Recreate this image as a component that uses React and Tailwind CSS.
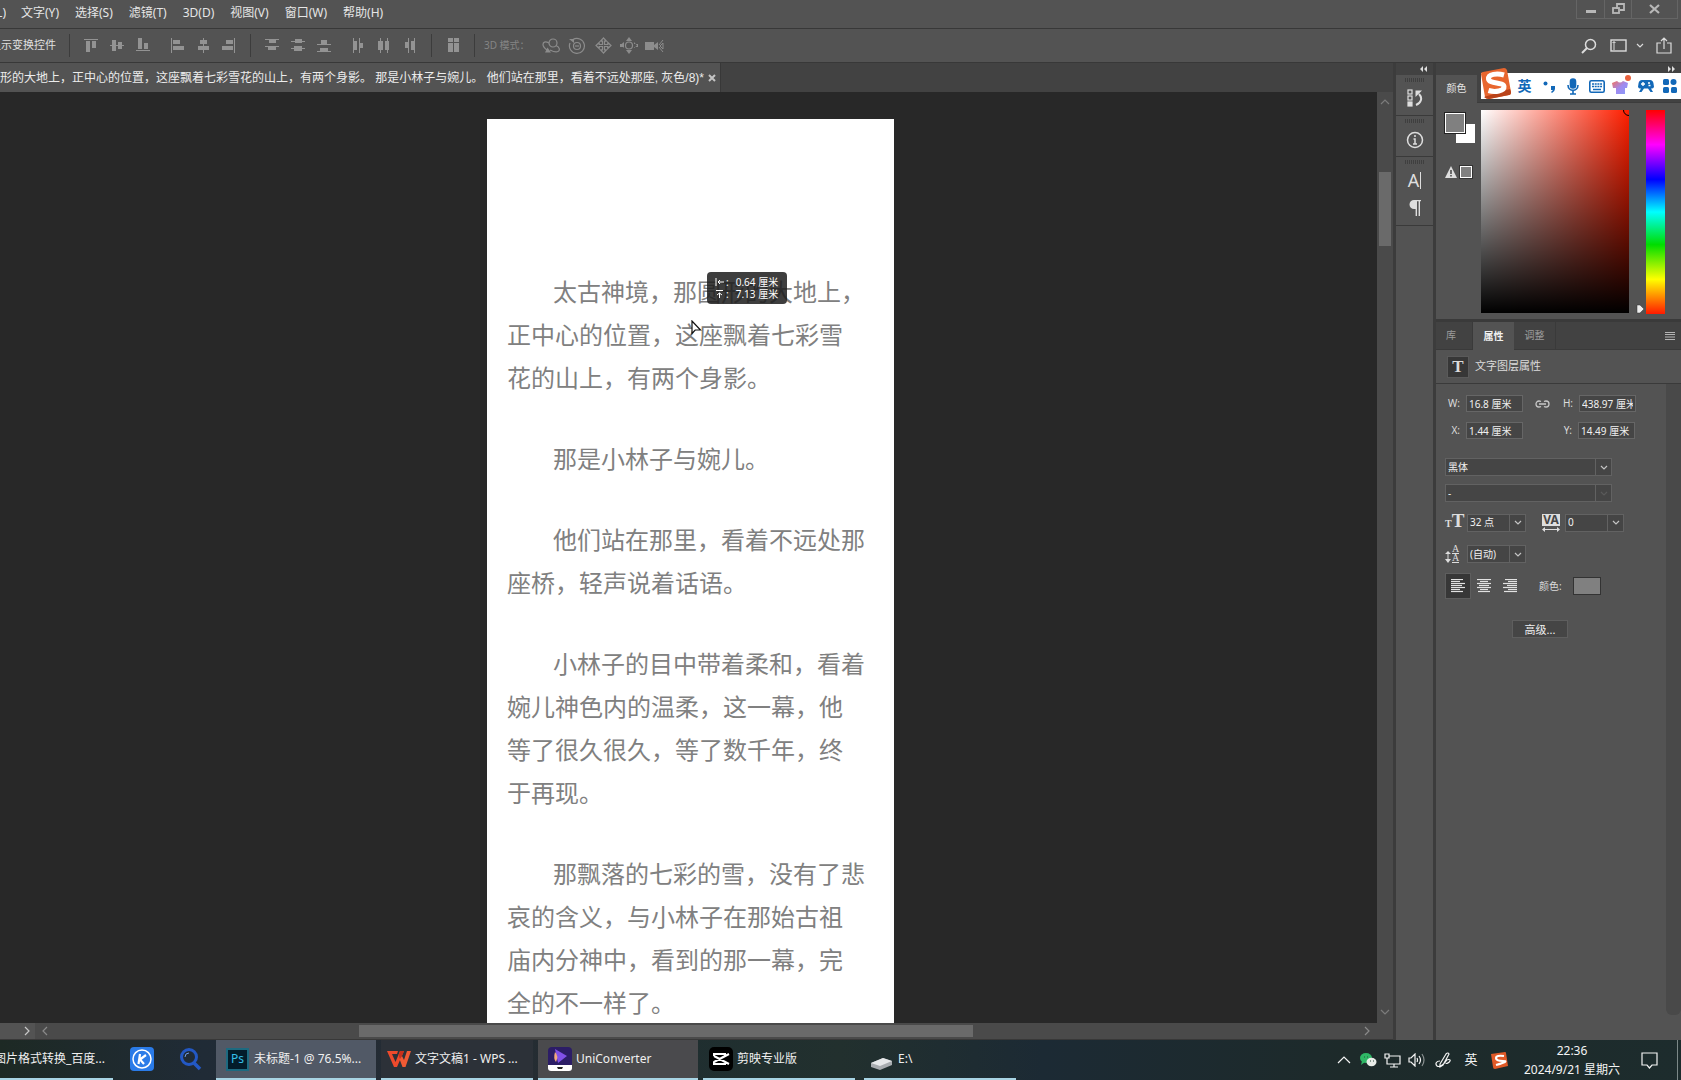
import React from "react";

const UI = "font-['Noto_Sans','Noto_Sans_CJK_SC',sans-serif]";

const MENUS = ["文字(Y)", "选择(S)", "滤镜(T)", "3D(D)", "视图(V)", "窗口(W)", "帮助(H)"];

const PARAGRAPHS = [
  ["太古神境，那圆形的大地上，", "正中心的位置，这座飘着七彩雪", "花的山上，有两个身影。"],
  ["那是小林子与婉儿。"],
  ["他们站在那里，看着不远处那", "座桥，轻声说着话语。"],
  ["小林子的目中带着柔和，看着", "婉儿神色内的温柔，这一幕，他", "等了很久很久，等了数千年，终", "于再现。"],
  ["那飘落的七彩的雪，没有了悲", "哀的含义，与小林子在那始古祖", "庙内分神中，看到的那一幕，完", "全的不一样了。"],
];

/* Each glyph is a list of filled rectangles [x, y, w, h] on a 16px grid. */
const ALIGN = [
  { name: "顶对齐", r: [[1, 2, 14, 1], [3, 4, 4, 11], [9, 4, 4, 7]] },
  { name: "垂直居中对齐", r: [[1, 8, 14, 1], [3, 3, 4, 11], [9, 5, 4, 7]] },
  { name: "底对齐", r: [[1, 13, 14, 1], [3, 1, 4, 11], [9, 6, 4, 6]] },
];
const ALIGN_H = [
  { name: "左对齐", r: [[2, 1, 1, 15], [4, 3, 7, 4], [4, 9, 11, 4]] },
  { name: "水平居中对齐", r: [[8, 1, 1, 15], [5, 3, 7, 4], [3, 9, 11, 4]] },
  { name: "右对齐", r: [[13, 1, 1, 15], [5, 3, 7, 4], [1, 9, 11, 4]] },
];
const DIST = [
  { name: "按顶分布", r: [[1, 2, 14, 1], [5, 3, 7, 3], [1, 9, 14, 1], [4, 10, 8, 3]] },
  { name: "垂直居中分布", r: [[1, 4, 14, 1], [5, 2, 7, 4], [1, 11, 14, 1], [4, 9, 8, 5]] },
  { name: "按底分布", r: [[1, 7, 14, 1], [5, 3, 6, 4], [1, 14, 14, 1], [4, 11, 8, 3]] },
];
const DIST_H = [
  { name: "按左分布", r: [[3, 1, 1, 15], [4, 4, 3, 9], [9, 1, 1, 15], [10, 6, 3, 5]] },
  { name: "水平居中分布", r: [[4, 1, 1, 15], [2, 4, 5, 9], [11, 1, 1, 15], [9, 4, 4, 9]] },
  { name: "按右分布", r: [[6, 1, 1, 15], [3, 5, 3, 6], [12, 1, 1, 15], [9, 4, 3, 9]] },
];
const AUTO = [{ name: "自动对齐图层", r: [[3, 1, 5, 4], [3, 6, 5, 9], [9, 1, 5, 4], [9, 6, 5, 9]] }];

function RectTool({ item }) {
  return (
    <button aria-label={item.name} className="flex w-[26px] justify-center text-[#939393]">
      <svg width="16" height="17" viewBox="0 0 16 17" fill="currentColor">
        {item.r.map((r, i) => (
          <rect key={i} x={r[0]} y={r[1]} width={r[2]} height={r[3]} />
        ))}
      </svg>
    </button>
  );
}

const Sep = () => <span className="h-[23px] w-px bg-[#3c3c3c]" />;

function Chevron({ className = "", d = "M1 1l4 4 4-4", w = 10, h = 6 }) {
  return (
    <svg className={className} width={w} height={h} viewBox={`0 0 ${w} ${h}`} fill="none" stroke="currentColor" strokeWidth="1.2">
      <path d={d} />
    </svg>
  );
}

function TopBars() {
  return (
    <>
      <header className="flex h-[29px] shrink-0 items-start justify-between border-b border-[#383838] bg-[#535353]">
        <nav className="flex h-[26px] items-center text-[12px] text-[#e6e6e6]">
          <button className="flex w-[6px] justify-end overflow-hidden whitespace-nowrap">图层(L)</button>
          <div className="ml-[15px] flex gap-4">
            {MENUS.map((m) => (
              <button key={m}>{m}</button>
            ))}
          </div>
        </nav>
        <div className="mr-[3px] flex h-[19px] border-b border-l border-[#656565] text-[#b8b8b8]">
          <button aria-label="最小化" className="flex w-[28px] items-center justify-center border-r border-[#656565]">
            <svg width="12" height="12"><rect x="1" y="7" width="10" height="3" fill="currentColor" /></svg>
          </button>
          <button aria-label="还原" className="flex w-[27px] items-center justify-center border-r border-[#656565]">
            <svg width="13" height="12" fill="none" stroke="currentColor" strokeWidth="1.8">
              <path d="M5 6V1h7v6H8" /><rect x="1" y="5" width="6" height="5" />
            </svg>
          </button>
          <button aria-label="关闭" className="flex w-[46px] items-center justify-center border-r border-[#656565]">
            <svg width="11" height="10" stroke="currentColor" strokeWidth="2.2"><path d="M1 1l9 8M10 1l-9 8" /></svg>
          </button>
        </div>
      </header>
      <div className="flex h-[34px] shrink-0 items-center border-b border-[#383838] bg-[#535353]">
        <div className="flex w-[56px] justify-end overflow-hidden text-[11px] whitespace-nowrap text-[#e0e0e0]">显示变换控件</div>
        <div className="ml-[13px] flex items-center">
          <Sep />
          <div className="mx-[8px] flex">{ALIGN.map((a) => <RectTool key={a.name} item={a} />)}</div>
          <div className="mr-[8px] flex">{ALIGN_H.map((a) => <RectTool key={a.name} item={a} />)}</div>
          <Sep />
          <div className="mx-[8px] flex">{DIST.map((a) => <RectTool key={a.name} item={a} />)}</div>
          <div className="mr-[8px] flex">{DIST_H.map((a) => <RectTool key={a.name} item={a} />)}</div>
          <Sep />
          <div className="mx-[8px] flex">{AUTO.map((a) => <RectTool key={a.name} item={a} />)}</div>
          <Sep />
          <span className="ml-[9px] w-[54px] text-[10px] whitespace-nowrap text-[#858585]">3D 模式：</span>
          <div className="flex items-center text-[#8c8c8c]">
            <button aria-label="旋转 3D 对象" className="flex w-[26px] justify-center">
              <svg width="18" height="16" viewBox="0 0 18 16" fill="none" stroke="currentColor" strokeWidth="1.2">
                <circle cx="11" cy="5" r="4" /><path d="M7 5C3 3 1 4 1 6.500s2 4 4 5.500M14 7.500c4 1.500 4 5 2 6s-5 0-8-1.500" /><path d="M5.500 9.500l-2.500 5h6z" fill="currentColor" stroke="none" />
              </svg>
            </button>
            <button aria-label="滚动 3D 对象" className="flex w-[26px] justify-center">
              <svg width="18" height="18" viewBox="0 0 18 18" fill="none" stroke="currentColor" strokeWidth="1.200">
                <path d="M5 2.500a7.500 7.500 0 1 1-3 3.500" /><path d="M1 2h5v4z" fill="currentColor" stroke="none" /><circle cx="9" cy="9" r="3.500" /><path d="M7 9h4" />
              </svg>
            </button>
            <button aria-label="拖动 3D 对象" className="flex w-[26px] justify-center">
              <svg width="17" height="17" viewBox="0 0 17 17" fill="none" stroke="currentColor" strokeWidth="1.200">
                <path d="M8.500 1l3 3.200h-2v3.300h3.300v-2l3.200 3-3.200 3v-2H9.500v3.300h2l-3 3.200-3-3.200h2V9.500H4.200v2L1 8.500l3.200-3v2h3.300V4.200h-2z" />
              </svg>
            </button>
            <button aria-label="滑动 3D 对象" className="flex w-[26px] justify-center">
              <svg width="18" height="17" viewBox="0 0 18 17" fill="currentColor">
                <circle cx="9" cy="8.500" r="3.500" fill="none" stroke="currentColor" strokeWidth="1.200" />
                <path d="M9 0l3 4H6zM9 17l3-4H6zM1 7.500L4 5v6zM0 7h4v3H0zM17 8.500L14 5v6zM14 7h4v3h-4z" />
              </svg>
            </button>
            <button aria-label="缩放 3D 对象" className="flex w-[26px] justify-center">
              <svg width="20" height="12" viewBox="0 0 20 12" fill="currentColor">
                <path d="M0 2h9v3l4-3v8L9 7v3H0z" /><path d="M18 0l-4 5M18 12l-4-5M18 3v6l-3-3z" fill="none" stroke="currentColor" />
              </svg>
            </button>
          </div>
        </div>
        <div className="mr-[9px] ml-auto flex items-center text-[#dcdcdc]">
          <button aria-label="搜索" className="mr-[13px]">
            <svg width="16" height="16" viewBox="0 0 16 16" fill="none" stroke="currentColor" strokeWidth="1.5">
              <circle cx="9.500" cy="6.500" r="5" /><path d="M6 10l-5 5" strokeWidth="2" />
            </svg>
          </button>
          <button aria-label="工作区" className="flex items-center gap-[9px]">
            <svg width="17" height="13" viewBox="0 0 17 13" fill="none" stroke="currentColor">
              <rect x="1" y="1" width="15" height="11" strokeWidth="1.400" /><path d="M3 3h2v1H3zM3 6h2M3 8h2M3 10h2" />
            </svg>
            <Chevron d="M1 1l3 3 3-3" w={8} h={5} />
          </button>
          <button aria-label="共享" className="ml-[12px]">
            <svg width="16" height="17" viewBox="0 0 16 17" fill="none" stroke="currentColor" strokeWidth="1.200">
              <path d="M5 6H1v10h14V6h-4M8 12V1M5 4l3-3 3 3" />
            </svg>
          </button>
        </div>
      </div>
    </>
  );
}

function Workspace() {
  return (
    <main className="flex min-w-0 flex-1 flex-col">
      <div className="flex h-[29px] shrink-0 bg-[#424242]">
        <div className="flex items-center gap-[4px] border-r border-[#383838] bg-[#535353] pr-[4px] font-['Liberation_Sans','Noto_Sans_CJK_SC',sans-serif] text-[12px] whitespace-nowrap text-[#ececec]">
          <span>形的大地上，正中心的位置，这座飘着七彩雪花的山上，有两个身影。 那是小林子与婉儿。 他们站在那里，看着不远处那座, 灰色/8)*</span>
          <button aria-label="关闭文档" className="text-[#c4c4c4]">
            <svg width="8" height="8" stroke="currentColor" strokeWidth="2"><path d="M1 1l6 6M7 1L1 7" /></svg>
          </button>
        </div>
      </div>
      <div className="flex min-h-0 flex-1">
        <div className="min-w-0 flex-1 overflow-hidden bg-[#282828] pt-[27px] pl-1">
          <article className="relative mx-auto flex h-full w-[407px] flex-col gap-[38px] bg-white pt-[150px] pl-[20px] font-['Noto_Sans_CJK_SC',sans-serif] text-[24px] leading-[43px] whitespace-nowrap text-[#808080]">
            {PARAGRAPHS.map((p, i) => (
              <p key={i} className="indent-[46px]">
                {p.map((l, k) => (
                  <React.Fragment key={k}>
                    {k > 0 && <br />}
                    {l}
                  </React.Fragment>
                ))}
              </p>
            ))}
            <div className={`absolute top-[153px] left-[220px] rounded-[4px] bg-[#1c1c1c]/85 py-[4px] pr-[9px] pl-[8px] text-[10px] leading-[12px] text-white ${UI}`}>
              <div className="flex items-center gap-[7px]">
                <span className="flex items-center gap-[2px]">
                  <svg width="9" height="8" fill="none" stroke="currentColor"><path d="M1 0v8M9 4H3M5 2L3 4l2 2" /></svg>:
                </span>
                0.64 厘米
              </div>
              <div className="flex items-center gap-[7px]">
                <span className="flex items-center gap-[2px]">
                  <svg width="9" height="8" fill="none" stroke="currentColor"><path d="M1 .5h7M4.500 8V3M2 5l2.500-2L7 5" /></svg>:
                </span>
                7.13 厘米
              </div>
            </div>
            <svg className="absolute top-[201px] left-[204px]" width="11" height="15" viewBox="0 0 11 15" fill="#fff" stroke="#111" strokeWidth="1.200">
              <path d="M1 1v12.500L4.200 10H9.500z" />
            </svg>
          </article>
        </div>
        <div className="flex w-4 shrink-0 flex-col items-center bg-[#4a4a4a] text-[#7c7c7c]">
          <Chevron className="mt-[7px]" d="M1 5l4-4 4 4" />
          <div className="mt-[67px] h-[74px] w-[12px] bg-[#6a6a6a]" />
          <Chevron className="mt-auto mb-[8px]" />
        </div>
      </div>
      <div className="flex h-[17px] shrink-0 items-center border-b border-[#383838] bg-[#4a4a4a] text-[#8a8a8a]">
        <div className="flex h-full w-[35px] items-center justify-end bg-[#535353] pr-[5px] text-[#c8c8c8]">
          <Chevron d="M1 1l4 4-4 4" w={6} h={10} />
        </div>
        <Chevron className="ml-[7px]" d="M5 1L1 5l4 4" w={6} h={10} />
        <div className="ml-[311px] h-[12px] w-[614px] bg-[#6a6a6a]" />
        <Chevron className="mr-[23px] ml-auto" d="M1 1l4 4-4 4" w={6} h={10} />
      </div>
    </main>
  );
}

const Grip = () => (
  <svg className="mt-[3px] text-[#3f3f3f]" width="19" height="4" stroke="currentColor" strokeDasharray="1 1"><path d="M0 2h19" strokeWidth="4" /></svg>
);

function IconStrip() {
  return (
    <aside className="flex w-[43px] shrink-0 flex-col border-x-[3px] border-[#3c3c3c] bg-[#535353] text-[#dedede]">
      <div className="flex h-[12px] items-center justify-end bg-[#424242] pr-[5px]">
        <svg width="8" height="6" fill="currentColor"><path d="M3 0v6L0 3zM7 0v6L4 3z" /></svg>
      </div>
      <div className="flex h-[41px] flex-col items-center border-b border-[#3a3a3a]">
        <Grip />
        <button aria-label="历史记录" className="mt-[7px]">
          <svg width="16" height="18" viewBox="0 0 16 18" fill="none" stroke="currentColor" strokeWidth="1.200">
            <rect x="1" y="1" width="4" height="4" /><rect x="1" y="7" width="4" height="4" /><rect x="1" y="13" width="4" height="4" fill="currentColor" />
            <path d="M9 16c5-2 7-7 3-11" strokeWidth="2" /><path d="M8.500 8V1.500H15z" fill="currentColor" stroke="none" />
          </svg>
        </button>
      </div>
      <div className="flex h-[41px] flex-col items-center border-b border-[#3a3a3a]">
        <Grip />
        <button aria-label="信息" className="mt-[8px]">
          <svg width="18" height="18" viewBox="0 0 18 18" fill="none" stroke="currentColor" strokeWidth="1.500">
            <circle cx="9" cy="9" r="7.500" /><path d="M9 4v2M7.500 8H9v5M7 13h4" />
          </svg>
        </button>
      </div>
      <div className="flex h-[69px] flex-col items-center border-b border-[#3a3a3a]">
        <Grip />
        <button aria-label="字符" className="mt-[6px] flex items-center gap-[1px] text-[18px] leading-[20px]">
          A<span className="h-[17px] w-px bg-[#dedede]" />
        </button>
        <button aria-label="段落" className="mt-[10px]">
          <svg width="12" height="16" viewBox="0 0 12 16" fill="currentColor">
            <path d="M6 0h6v1.300h-1V16H9.600V1.300H8V16H6.600V9H5a4.500 4.500 0 0 1 0-9z" />
          </svg>
        </button>
      </div>
    </aside>
  );
}

function ImeBar() {
  return (
    <div className="absolute top-[10px] right-0 left-[45px] flex h-[26px] items-center bg-white text-[#1268b8]">
      <svg className="absolute -top-[5px] -left-[2px]" width="34" height="32" viewBox="0 0 34 32">
        <path d="M2 6Q2 4 4 4L25 0q2 0 3 2l4 22q0 3-2 3L10 31q-3 0-4-2z" fill="#e8662e" />
        <path d="M5 29q2 2 5 2l20-4q2 0 2-3l-1-3z" fill="#b9431a" />
        <path d="M25 7C18 5 9 6 9.500 11s15 3 15.500 7.500-9 6-15.500 4" fill="none" stroke="#fff" strokeWidth="5" />
      </svg>
      <div className="ml-[31px] flex flex-1 items-center">
        <button className="w-[25px] text-center text-[14px] leading-[20px] font-bold">英</button>
        <button aria-label="标点" className="flex w-[24px] justify-center">
          <svg width="12" height="14" fill="currentColor"><circle cx="2.500" cy="4.500" r="2" /><path d="M8 7h4v3q0 2-3 4l-1-1q1-1 2-2H8z" /></svg>
        </button>
        <button aria-label="语音" className="flex w-[24px] justify-center">
          <svg width="14" height="17" viewBox="0 0 14 17" fill="none" stroke="currentColor" strokeWidth="1.600">
            <rect x="4.500" y="1" width="5" height="9" rx="2.500" fill="currentColor" /><path d="M2 7c0 7 10 7 10 0M7 12v4M4 16h6" />
          </svg>
        </button>
        <button aria-label="键盘" className="flex w-[24px] justify-center">
          <svg width="16" height="13" viewBox="0 0 16 13"><rect x=".8" y=".8" width="14.400" height="11.400" rx="1.500" fill="#fff" stroke="currentColor" strokeWidth="1.600" /><path d="M3 4h10M3 6.500h10" stroke="currentColor" strokeWidth="1.500" strokeDasharray="2 .7" /><path d="M4 9.500h8" stroke="currentColor" strokeWidth="1.500" /></svg>
        </button>
        <button aria-label="皮肤" className="flex w-[25px] justify-center">
          <svg className="mb-[3px]" width="19" height="20" viewBox="0 0 19 20">
            <defs><linearGradient id="shirt" x1="0" x2="1" y2="1"><stop offset="0" stopColor="#f4705c" /><stop offset=".5" stopColor="#a08af0" /><stop offset="1" stopColor="#8a9cf8" /></linearGradient></defs>
            <path d="M5 6q3 3 6 0l5 2-1 5h-2v6H4v-6H1L0 8z" fill="url(#shirt)" /><circle cx="16" cy="3" r="3" fill="#e8603c" />
          </svg>
        </button>
        <button aria-label="游戏" className="flex w-[24px] justify-center">
          <svg width="16" height="14" viewBox="0 0 16 14"><path d="M4 1h8q3 0 3.500 3.500L16 8q-1 2-3 1.500L15 13h-2.500L10 9.500H6L3.500 13H1l2-3.500Q1 10 0 8l.5-3.500Q1 1 4 1z" fill="currentColor" /><path d="M3 5h4M5 3v4M10 4h2M10.500 6.500h2" stroke="#fff" strokeWidth="1.400" /></svg>
        </button>
        <button aria-label="工具箱" className="flex w-[24px] justify-center">
          <svg width="14" height="14" fill="currentColor"><rect width="6" height="6" rx="1.500" /><circle cx="10.500" cy="3" r="3" /><rect y="8" width="6" height="6" rx="1.500" /><rect x="8" y="8" width="6" height="6" rx="1.500" /></svg>
        </button>
      </div>
    </div>
  );
}

function ColorPanel() {
  return (
    <section className="relative border-b-[3px] border-[#3a3a3a]">
      <div className="flex h-[12px] items-center justify-end bg-[#424242] pr-[5px] text-[#dedede]">
        <svg width="8" height="6" fill="currentColor"><path d="M0 0v6l3-3zM4 0v6l3-3z" /></svg>
      </div>
      <div className="flex h-[28px] border-b border-[#3c3c3c] bg-[#424242]">
        <button className="-mb-px w-[41px] bg-[#535353] pb-[1px] text-center text-[10px] text-[#e6e6e6]">颜色</button>
      </div>
      <ImeBar />
      <div className="flex pt-[7px] pb-[5px]">
        <div className="w-[45px] pt-[3px] pl-[9px]">
          <div className="relative h-[30px] w-[30px]">
            <button aria-label="背景色" className="absolute right-0 bottom-0 h-[19px] w-[19px] bg-white" />
            <button aria-label="前景色" className="absolute top-0 left-0 h-[20px] w-[20px] border border-white bg-[#808080] outline outline-[#222]" />
          </div>
          <div className="mt-[23px] flex items-center gap-[3px]">
            <svg width="12" height="12" viewBox="0 0 12 12"><path d="M6 0l6 12H0z" fill="#dedede" /><path d="M6 4v4M6 9v1.500" stroke="#444" strokeWidth="1.500" /></svg>
            <button aria-label="可打印颜色" className="h-[12px] w-[12px] border border-white bg-[#808080] outline outline-[#333]" />
          </div>
        </div>
        <div className="relative h-[203px] w-[148px] overflow-hidden bg-[linear-gradient(to_bottom,transparent,#000),linear-gradient(to_right,#fff,#ff1f00)]">
          <span className="absolute -top-[6px] -right-[6px] h-[12px] w-[12px] rounded-full border border-black" />
        </div>
        <div className="ml-[7px] flex items-end gap-[2px]">
          <svg width="8" height="10"><path d="M1 1h3l4 4-4 4H1z" fill="#eee" stroke="#333" strokeWidth=".5" /></svg>
          <div className="h-[204px] w-[19px] bg-[linear-gradient(to_bottom,#ff0000,#ff00ff_17%,#0000ff_34%,#00ffff_50%,#00dd00_66%,#ffff00_83%,#ff1a00)]" />
        </div>
      </div>
    </section>
  );
}

function Field({ label, value, className = "" }) {
  return (
    <label className={`flex items-center text-[10px] text-[#dcdcdc] ${className}`}>
      <span className="w-[20px] pr-[6px] text-right">{label}</span>
      <input defaultValue={value} className="h-[17px] w-[57px] border border-[#666] bg-[#454545] px-[2px] text-[10px] text-[#f0f0f0]" />
    </label>
  );
}

function Drop({ label, value, className, disabled }) {
  return (
    <div className={`relative flex h-[18px] border border-[#626262] bg-[#454545] ${className}`}>
      <select aria-label={label} disabled={disabled} className="w-full appearance-none bg-transparent pl-[2px] text-[10px] leading-[15px] text-[#f0f0f0] opacity-100">
        <option>{value}</option>
      </select>
      <span className={`pointer-events-none absolute inset-y-0 right-0 flex w-[16px] items-center justify-center border-l border-[#626262] ${disabled ? "text-[#5a5a5a]" : "text-[#c4c4c4]"}`}>
        <Chevron d="M1 1l3 3 3-3" w={8} h={5} />
      </span>
    </div>
  );
}

function Lines({ label, xs, active }) {
  return (
    <button aria-label={label} className={`flex h-[26px] w-[26px] items-center justify-center ${active ? "border border-[#5e5e5e] bg-[#373737]" : ""}`}>
      <svg width="14" height="14" stroke="#e2e2e2">
        {xs.map(([a, b], i) => (
          <path key={i} d={`M${a} ${i * 2 + 0.5}H${b}`} strokeWidth="1.200" />
        ))}
      </svg>
    </button>
  );
}

function PropertiesPanel() {
  return (
    <section className="flex min-h-0 flex-1 flex-col">
      <div className="flex h-[28px] shrink-0 items-stretch border-b border-[#3a3a3a] bg-[#424242] text-[10px] text-[#9c9c9c]">
        <button className="w-[37px] border-r border-[#3a3a3a] pr-[6px]">库</button>
        <button className="-mb-px w-[41px] bg-[#535353] font-bold text-[#f0f0f0]">属性</button>
        <button className="w-[42px] border-r border-[#3a3a3a]">调整</button>
        <button aria-label="面板菜单" className="mr-[6px] ml-auto self-center text-[#b4b4b4]">
          <svg width="10" height="8" stroke="currentColor"><path d="M0 .5h10M0 2.500h10M0 5h10M0 7.500h10" /></svg>
        </button>
      </div>
      <div className="flex h-[34px] shrink-0 items-center border-b border-[#3a3a3a] pl-[11px] text-[11px] text-[#dcdcdc]">
        <span className="flex h-[22px] w-[22px] items-center justify-center border border-[#5a5a5a] bg-[#373737] font-['Liberation_Serif',serif] text-[17px] font-bold">T</span>
        <h2 className="ml-[6px]">文字图层属性</h2>
      </div>
      <div className="flex min-h-0 flex-1">
        <form className="min-w-0 flex-1 pt-[11px] pl-[9px]" onSubmit={(e) => e.preventDefault()}>
          <div className="flex items-center">
            <Field label="W:" value="16.8 厘米" className="ml-[1px]" />
            <svg className="mr-[9px] ml-[12px]" width="15" height="8" viewBox="0 0 15 8" fill="none" stroke="#c8c8c8" strokeWidth="1.300"><path d="M6 1.500Q5 1 4 1a3 3 0 0 0 0 6q1 0 2-.5M9 1.500Q10 1 11 1a3 3 0 0 1 0 6q-1 0-2-.5M4 4h7" /></svg>
            <Field label="H:" value="438.97 厘米" />
          </div>
          <div className="mt-[10px] flex items-center">
            <Field label="X:" value="1.44 厘米" className="ml-[1px]" />
            <Field label="Y:" value="14.49 厘米" className="ml-[35px]" />
          </div>
          <Drop label="字体" value="黑体" className="mt-[19px] w-[167px]" />
          <Drop label="字体样式" value="-" className="mt-[8px] w-[167px]" disabled />
          <div className="mt-[11px] flex h-[19px] items-center">
            <span className="flex w-[22px] items-baseline font-['Liberation_Serif',serif] leading-[18px] font-bold text-[#dedede]">
              <span className="text-[10px]">T</span><span className="text-[19px]">T</span>
            </span>
            <Drop label="字体大小" value="32 点" className="w-[59px]" />
            <span className="ml-[16px] flex w-[23px] flex-col gap-[1px]">
              <span className="w-[18px] bg-[#dedede] text-center text-[12px] leading-[12px] font-bold text-[#454545]">VA</span>
              <svg width="18" height="5" stroke="#dedede" fill="#dedede"><path d="M3 2.500h12" /><path d="M0 2.500L3 0v5zM18 2.500L15 0v5z" stroke="none" /></svg>
            </span>
            <Drop label="字距" value="0" className="w-[59px]" />
          </div>
          <div className="mt-[13px] flex h-[18px] items-center">
            <span className="flex w-[22px] items-center gap-[1px] text-[#dedede]">
              <svg width="6" height="12" fill="currentColor" className="mt-[5px]"><path d="M3 0l3 3H3.500v5H6L3 12 0 8h2.500V3H0z" /></svg>
              <span className="flex flex-col text-center font-['Liberation_Serif',serif] text-[10px] leading-[8px]">
                <span className="border-b border-[#dedede]">A</span><span className="border-b border-[#dedede]">A</span>
              </span>
            </span>
            <Drop label="行距" value="(自动)" className="w-[59px]" />
          </div>
          <div className="mt-[10px] flex items-center">
            <Lines label="左对齐文本" active xs={[[0, 12], [0, 9], [0, 14], [0, 11], [0, 14], [0, 9], [0, 12]]} />
            <Lines label="居中对齐文本" xs={[[0, 14], [3, 11], [0, 14], [2, 12], [0, 14], [3, 11], [1, 13]]} />
            <Lines label="右对齐文本" xs={[[2, 14], [5, 14], [0, 14], [4, 14], [0, 14], [5, 14], [1, 14]]} />
            <span className="ml-[16px] w-[34px] text-[10px] whitespace-nowrap text-[#dcdcdc]">颜色:</span>
            <button aria-label="文本颜色" className="h-[18px] w-[28px] border border-[#333] bg-[#808080]" />
          </div>
          <button className="mt-[21px] ml-[67px] h-[18px] w-[56px] border border-[#5e5e5e] bg-[#454545] text-[11px] leading-[15px] text-[#f0f0f0]">高级...</button>
        </form>
        <div className="mb-[25px] w-[15px] rounded-b-[6px] bg-[#494949]" />
      </div>
    </section>
  );
}

function Task({ className = "", children, line = true }) {
  return (
    <button className={`flex h-full items-center border-b-2 text-[12px] whitespace-nowrap text-[#f0f0f0] ${line ? "border-[#a8d4e4]" : "border-transparent"} ${className}`}>
      {children}
    </button>
  );
}

function Taskbar() {
  return (
    <footer className="flex h-[40px] shrink-0 items-stretch bg-[linear-gradient(to_right,#1d2924,#202b36_12%,#262c33_30%,#1f2e30_40%,#22302e_50%,#1c2a34_62%,#1d2a2a_80%,#1d2c2d)] text-white">
      <Task className="w-[113px] justify-end overflow-hidden pr-[8px]"><span>图片格式转换_百度...</span></Task>
      <Task line={false} className="ml-[17px]">
        <svg width="24" height="24" viewBox="0 0 24 24"><rect width="24" height="24" rx="4" fill="#2a7be8" /><circle cx="12" cy="12" r="9" fill="none" stroke="#fff" strokeWidth="1.500" /><path d="M10 7L8.500 17M16 8l-6 4.500L14 17" stroke="#fff" strokeWidth="2.200" fill="none" /></svg>
      </Task>
      <Task line={false} className="ml-[25px]">
        <svg width="23" height="23" viewBox="0 0 23 23" fill="none" stroke="#2358c4"><circle cx="10" cy="9" r="7.500" strokeWidth="3" /><path d="M15 15l6 6" strokeWidth="3.500" /><path d="M6 9q0-4 4-4" stroke="#6f9be8" /></svg>
      </Task>
      <Task className="ml-[14px] w-[160px] gap-[5px] bg-[#515966] pl-[10px]">
        <span className="h-[23px] w-[23px] border-2 border-[#1d6a80] bg-[#031c2a] text-center text-[12px] leading-[18px] text-[#35bfe8]">Ps</span>
        未标题-1 @ 76.5%...
      </Task>
      <Task className="ml-[5px] w-[152px] gap-[4px] bg-[#2c3138] pl-[6px]">
        <svg width="24" height="18" viewBox="0 0 24 18"><path d="M0 1h11l-1 3H5l3.500 8L13 1h4l-7 16H7z" fill="#ee4a2c" /><path d="M12.500 9l3 8h3L24 1h-4l-3 9-2-4z" fill="#f05a34" /><path d="M13 1h4l-1.500 4-2.500 4-1.500-4z" fill="#c8301c" /></svg>
        文字文稿1 - WPS ...
      </Task>
      <Task className="ml-[5px] w-[160px] gap-[4px] bg-[#4a4a4d] pl-[10px]">
        <svg width="24" height="24" viewBox="0 0 24 24"><rect width="24" height="24" rx="4" fill="#2c1d66" /><path d="M0 18h24v3q0 3-3 3H3q-3 0-3-3z" fill="#fff" /><path d="M7 2l12 7-9 7z" fill="#8150e8" /><path d="M7 5q4 4 1 10-3-3-1-10z" fill="#f4a880" /><path d="M9 20h6l-1 2h-4z" fill="#222" /></svg>
        UniConverter
      </Task>
      <Task className="ml-[5px] w-[152px] gap-[4px] pl-[6px]">
        <svg width="24" height="24" viewBox="0 0 24 24"><rect width="24" height="24" rx="5" fill="#000" /><path d="M5 9V7h11v2L5 15v2h11v-2M20 7L5 15M5 9l15 8" fill="none" stroke="#fff" strokeWidth="2" /></svg>
        剪映专业版
      </Task>
      <Task className="ml-[9px] w-[152px] gap-[6px] pl-[7px]">
        <svg className="mt-[9px]" width="21" height="12" viewBox="0 0 21 12"><path d="M0 5l12-5 9 3v4l-12 5-9-3z" fill="#a8acb0" /><path d="M0 5l12-5 9 3-12 5z" fill="#e6e8ea" /></svg>
        E:\
      </Task>
      <div className="ml-auto flex items-center text-[12px] text-[#f4f4f4]">
        <button aria-label="显示隐藏的图标" className="flex w-[24px] justify-center"><Chevron d="M1 7l6-6 6 6" w={14} h={8} /></button>
        <button aria-label="微信" className="flex w-[24px] justify-center">
          <svg width="17" height="14" viewBox="0 0 17 14"><ellipse cx="6" cy="5" rx="6" ry="5" fill="#2fb866" /><path d="M2 8l-1 4 4-3z" fill="#2fb866" /><ellipse cx="11.500" cy="9" rx="5" ry="4.200" fill="#e8ece8" /><path d="M4 4h1M7 4h1M10 8h1M13 8h1" stroke="#2a4a3a" /></svg>
        </button>
        <button aria-label="网络" className="flex w-[24px] justify-center">
          <svg width="17" height="15" fill="none" stroke="currentColor" strokeWidth="1.200"><path d="M5 3h11v8H3V7M10 11v3M6 14h8M1 1h4v4H1zM3 5v3" /></svg>
        </button>
        <button aria-label="音量" className="flex w-[24px] justify-center">
          <svg width="17" height="14" fill="none" stroke="currentColor" strokeWidth="1.200"><path d="M1 5h2l4-4v12L3 9H1zM9 5q1 2 0 4M11 3q3 4 0 8" /><path d="M14 1q4 6 0 12" opacity=".5" /></svg>
        </button>
        <button aria-label="手写" className="flex w-[30px] justify-center">
          <svg width="17" height="17" viewBox="0 0 17 17" fill="none" stroke="currentColor" strokeWidth="1.200"><path d="M5 12L11 2q2-2 3 0L8 13l-3 2zM5 9c-4 0-5 3-3 5 3 2 8-3 9-5s5-2 4 0-4 3-4 2" /></svg>
        </button>
        <button className="w-[26px] text-center text-[13px]">英</button>
        <button aria-label="搜狗输入法" className="flex w-[30px] justify-center">
          <svg width="17" height="17" viewBox="0 0 17 17"><path d="M0 2l14-2q1 0 1 1l2 13-13 3q-2 0-2-2z" fill="#e05a28" /><path d="M13 4Q5 3 5 6t7 3-7 4" fill="none" stroke="#fff" strokeWidth="2.200" /></svg>
        </button>
        <time className="w-[116px] text-center leading-[19px] whitespace-nowrap">22:36<br />2024/9/21 星期六</time>
        <button aria-label="通知" className="mr-[19px] ml-[11px]">
          <svg width="17" height="17" fill="none" stroke="currentColor" strokeWidth="1.200"><path d="M1 1h15v12h-5l-2.500 3L6 13H1z" /></svg>
        </button>
        <span className="mr-[3px] h-[40px] w-px bg-[#7c8888]" />
      </div>
    </footer>
  );
}

export default function App() {
  return (
    <div className={`flex h-screen flex-col overflow-hidden bg-[#535353] ${UI}`}>
      <TopBars />
      <div className="flex min-h-0 flex-1">
        <Workspace />
        <IconStrip />
        <aside className="flex w-[245px] shrink-0 flex-col bg-[#535353]">
          <ColorPanel />
          <PropertiesPanel />
        </aside>
      </div>
      <Taskbar />
    </div>
  );
}
